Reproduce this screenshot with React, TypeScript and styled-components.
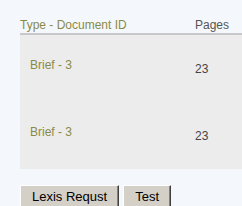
import React from "react";
import styled, { createGlobalStyle } from "styled-components";

const Global = createGlobalStyle`
  html, body { margin: 0; padding: 0; background: #f4f8fc; }
  body { font-family: "Liberation Sans", Arial, sans-serif; overflow: hidden; }
`;

const Page = styled.div`
  padding: 18px 0 0 20px;
`;

const HeaderRow = styled.div`
  display: grid;
  grid-template-columns: 175px 1fr;
  height: 14px;
  line-height: 14px;
  font-size: 12px;
  padding-bottom: 1px;
  border-bottom: 2px solid #c8c8c8;
`;

const HeadCell = styled.div<{ $olive?: boolean }>`
  color: ${(p) => (p.$olive ? "#8a8a48" : "#555")};
`;

const Panel = styled.div`
  background: #ececec;
`;

const Row = styled.div`
  display: grid;
  grid-template-columns: 175px 1fr;
  height: 67px;
  font-size: 12px;
  line-height: 14px;
`;

const TypeCell = styled.div`
  padding: 23px 0 0 10px;
  color: #8a8a48;
`;

const PagesCell = styled.div`
  padding-top: 27px;
  color: #444;
`;

const Buttons = styled.div`
  display: flex;
  gap: 4px;
  margin-top: 16px;
`;

const Button = styled.button`
  height: 24px;
  padding: 0 11px;
  font-family: "Liberation Sans", Arial, sans-serif;
  font-size: 13px;
  color: #000;
  background: #d4d0c8;
  border: 1px solid;
  border-color: #fff #404040 #404040 #fff;
  box-shadow: inset -1px -1px 0 #808080;
  line-height: 20px;
`;

const rows = [
  { type: "Brief - 3", pages: "23" },
  { type: "Brief - 3", pages: "23" },
];

export default function App() {
  return (
    <>
      <Global />
      <Page>
        <HeaderRow>
          <HeadCell $olive>Type - Document ID</HeadCell>
          <HeadCell>Pages</HeadCell>
        </HeaderRow>
        <Panel>
          {rows.map((r, i) => (
            <Row key={i}>
              <TypeCell>{r.type}</TypeCell>
              <PagesCell>{r.pages}</PagesCell>
            </Row>
          ))}
        </Panel>
        <Buttons>
          <Button>Lexis Requst</Button>
          <Button>Test</Button>
        </Buttons>
      </Page>
    </>
  );
}
